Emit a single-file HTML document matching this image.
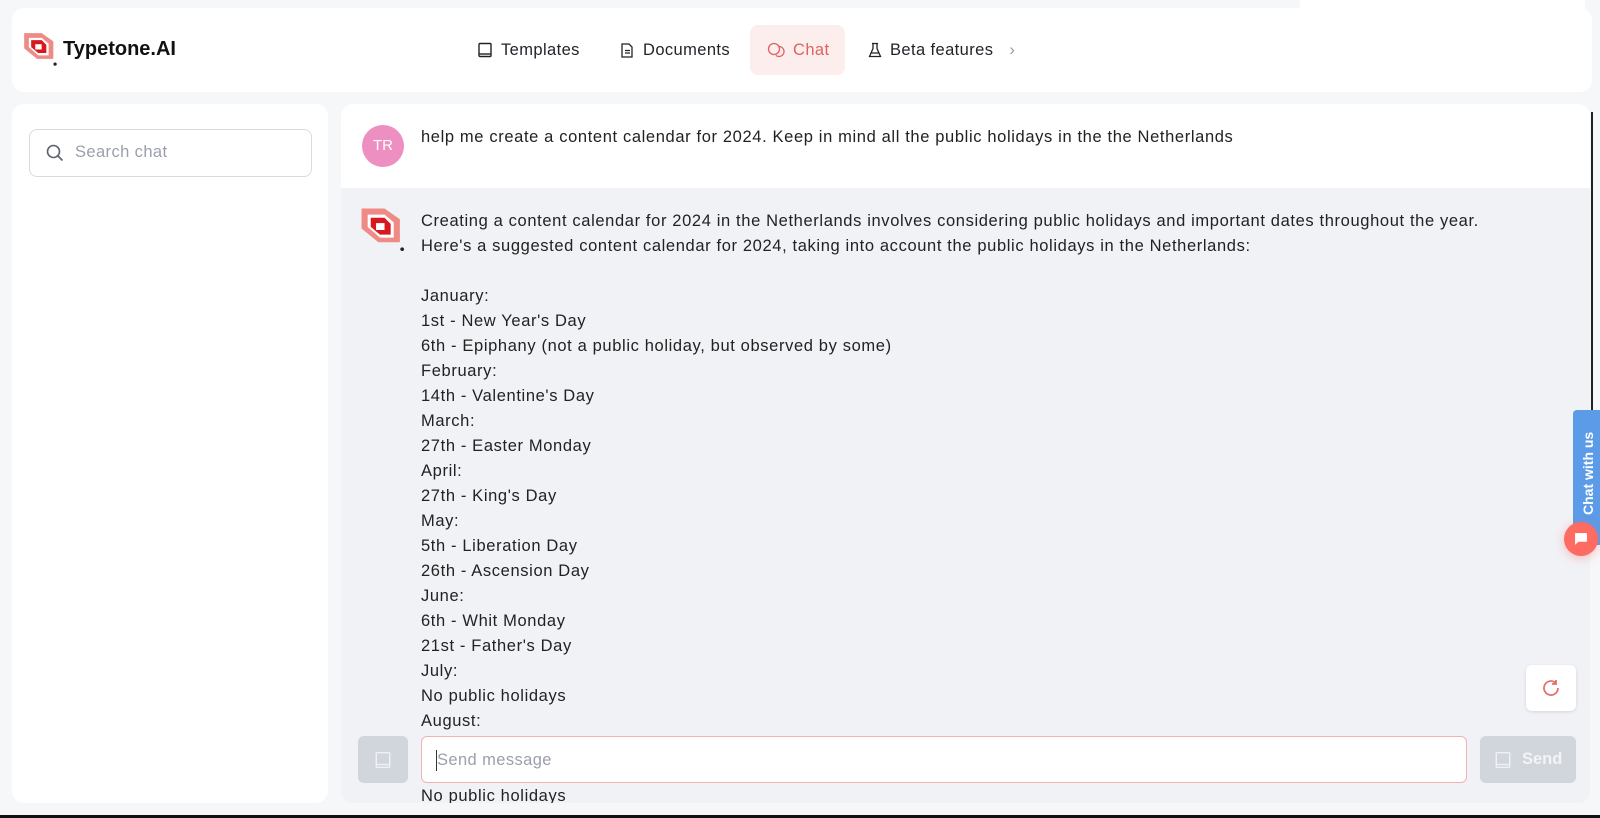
<!DOCTYPE html>
<html><head><meta charset="utf-8"><style>
*{box-sizing:border-box;margin:0;padding:0}
body{width:1600px;height:818px;background:#f6f7f9;font-family:"Liberation Sans",sans-serif;position:relative;overflow:hidden;color:#1f2328}
.abs{position:absolute}
.card{background:#fff;border-radius:12px}
.nav{position:absolute;top:26px;height:48px;display:flex;align-items:center;font-size:16.5px;letter-spacing:0.4px;color:#1f2328;gap:8px}
.msg{position:absolute;left:421px;font-size:16.5px;letter-spacing:0.63px;line-height:25px;color:#222;white-space:nowrap}
</style></head><body>
<div class="abs" style="left:1300px;top:0;width:285px;height:10px;background:#fff"></div>
<div class="abs card" style="left:12px;top:8px;width:1580px;height:84px"></div>
<svg class="abs" style="left:23px;top:32px" width="35" height="35" viewBox="0 0 30 30">
<path d="M1 1h15l10 7v15H12L1 14z" fill="#f08a85"/><path d="M5 5h11l6 5v10h-9l-8-7z" fill="#fff"/><path d="M7 7h9l4 4v7h-7l-6-5z" fill="#d7191f"/><path d="M10.5 10.5h5.5v4.5h-5.5z" fill="#fff"/><circle cx="27.5" cy="27.5" r="1.4" fill="#222"/></svg>
<div class="abs" style="left:63px;top:38px;font-size:20px;font-weight:bold;color:#111">Typetone.AI</div>
<div class="nav" style="left:477px"><svg width="16" height="16" viewBox="0 0 16 16" fill="none" stroke="#222" stroke-width="1.4"><rect x="2" y="1.5" width="12" height="13" rx="1"/><path d="M2 12h12"/></svg>Templates</div>
<div class="nav" style="left:619px"><svg width="16" height="17" viewBox="0 0 16 16" fill="none" stroke="#222" stroke-width="1.3"><path d="M3 1.5h7l3 3v10H3z M6 8h5M6 10.5h5"/></svg>Documents</div>
<div class="abs" style="left:750px;top:25px;width:95px;height:50px;background:#fdeeee;border-radius:8px"></div>
<div class="nav" style="left:767px;color:#e0625d"><svg width="18" height="16" viewBox="0 0 18 16" fill="none" stroke="#e0625d" stroke-width="1.3"><circle cx="7" cy="7" r="5.5"/><path d="M9 13.5a5 5 0 1 0 3-9"/></svg>Chat</div>
<div class="nav" style="left:868px"><svg width="14" height="16" viewBox="0 0 14 16" fill="none" stroke="#222" stroke-width="1.3"><path d="M4 1.5h6M5 1.5v5l-3.5 8h11L9 6.5v-5M3 11h8"/></svg>Beta features <span style="color:#999;margin-left:8px">›</span></div>

<div class="abs card" style="left:12px;top:104px;width:316px;height:699px"></div>
<div class="abs" style="left:29px;top:129px;width:283px;height:48px;border:1px solid #d8dbe0;border-radius:8px"></div>
<svg class="abs" style="left:46px;top:144px" width="18" height="18" viewBox="0 0 18 18" fill="none" stroke="#5b6170" stroke-width="1.6"><circle cx="7.5" cy="7.5" r="6"/><path d="M12 12l4.5 4.5"/></svg>
<div class="abs" style="left:75px;top:143px;font-size:16.5px;letter-spacing:0.4px;color:#9aa0ab">Search chat</div>

<div class="abs" style="left:341px;top:104px;width:1249px;height:699px;background:#f1f2f6;border-radius:12px;overflow:hidden">
<div style="height:84px;background:#fff"></div></div>
<div class="abs" style="left:362px;top:125px;width:42px;height:42px;border-radius:50%;background:#ee8fc1;color:#fff;font-size:15px;line-height:42px;text-align:center">TR</div>
<div class="msg" style="top:125px">help me create a content calendar for 2024. Keep in mind all the public holidays in the the Netherlands</div>
<svg class="abs" style="left:360px;top:207px" width="46" height="46" viewBox="0 0 30 30">
<path d="M1 1h15l10 7v15H12L1 14z" fill="#f08a85"/><path d="M5 5h11l6 5v10h-9l-8-7z" fill="#fff"/><path d="M7 7h9l4 4v7h-7l-6-5z" fill="#d7191f"/><path d="M10.5 10.5h5.5v4.5h-5.5z" fill="#fff"/><circle cx="27.5" cy="27.5" r="1.2" fill="#222"/></svg>
<div class="msg" style="top:209px">Creating a content calendar for 2024 in the Netherlands involves considering public holidays and important dates throughout the year.<br>Here's a suggested content calendar for 2024, taking into account the public holidays in the Netherlands:<br><br>January:<br>1st - New Year's Day<br>6th - Epiphany (not a public holiday, but observed by some)<br>February:<br>14th - Valentine's Day<br>March:<br>27th - Easter Monday<br>April:<br>27th - King's Day<br>May:<br>5th - Liberation Day<br>26th - Ascension Day<br>June:<br>6th - Whit Monday<br>21st - Father's Day<br>July:<br>No public holidays<br>August:<br><br><br>No public holidays</div>
<div class="abs" style="left:341px;top:803px;width:1260px;height:13px;background:#f6f7f9"></div>

<div class="abs" style="left:358px;top:736px;width:50px;height:47px;background:#d1d5dc;border-radius:6px"></div>
<svg class="abs" style="left:374px;top:751px" width="18" height="18" viewBox="0 0 16 16" fill="none" stroke="#eef0f3" stroke-width="1.3"><rect x="2" y="1.5" width="12" height="13" rx="1"/><path d="M2 12h12"/></svg>
<div class="abs" style="left:421px;top:736px;width:1046px;height:47px;background:#fff;border:1px solid #f2b3b0;border-radius:6px"></div>
<div class="abs" style="left:436px;top:750px;width:1px;height:21px;background:#333"></div>
<div class="abs" style="left:437px;top:751px;font-size:16.5px;letter-spacing:0.4px;color:#9aa0ab">Send message</div>
<div class="abs" style="left:1480px;top:736px;width:96px;height:47px;background:#d1d5dc;border-radius:6px"></div>
<svg class="abs" style="left:1494px;top:751px" width="18" height="18" viewBox="0 0 16 16" fill="none" stroke="#eef0f3" stroke-width="1.3"><rect x="2" y="1.5" width="12" height="13" rx="1"/><path d="M2 12h12"/></svg>
<div class="abs" style="left:1522px;top:750px;font-size:16.5px;font-weight:bold;color:#f3f4f6">Send</div>
<div class="abs" style="left:1526px;top:665px;width:50px;height:46px;background:#fff;border-radius:6px;box-shadow:0 1px 3px rgba(0,0,0,.12)"></div>
<svg class="abs" style="left:1539px;top:676px" width="24" height="24" viewBox="0 0 24 24" fill="none" stroke="#e8716b" stroke-width="1.8"><path d="M19 12a7 7 0 1 1-3-5.7"/><path d="M17 4v4h-4" fill="#e8716b"/></svg>

<div class="abs" style="left:1591px;top:112px;width:2px;height:298px;background:#222"></div>
<div class="abs" style="left:1573px;top:410px;width:27px;height:135px;background:#5b9be8;border-radius:4px 0 0 4px"></div>
<div class="abs" style="left:1578px;top:515px;transform:rotate(-90deg);transform-origin:0 0;color:#fff;font-size:14px;font-weight:bold;white-space:nowrap;line-height:20px">Chat with us</div>
<div class="abs" style="left:1564px;top:522px;width:34px;height:34px;border-radius:50%;background:#fd6b63;box-shadow:0 2px 10px rgba(253,107,99,.4)"></div>
<svg class="abs" style="left:1574px;top:532px" width="14" height="14" viewBox="0 0 13 13"><path d="M1 1h11v8H4l-3 3z" fill="#fff"/></svg>
<div class="abs" style="left:0;top:815px;width:1600px;height:3px;background:#111"></div>
</body></html>
